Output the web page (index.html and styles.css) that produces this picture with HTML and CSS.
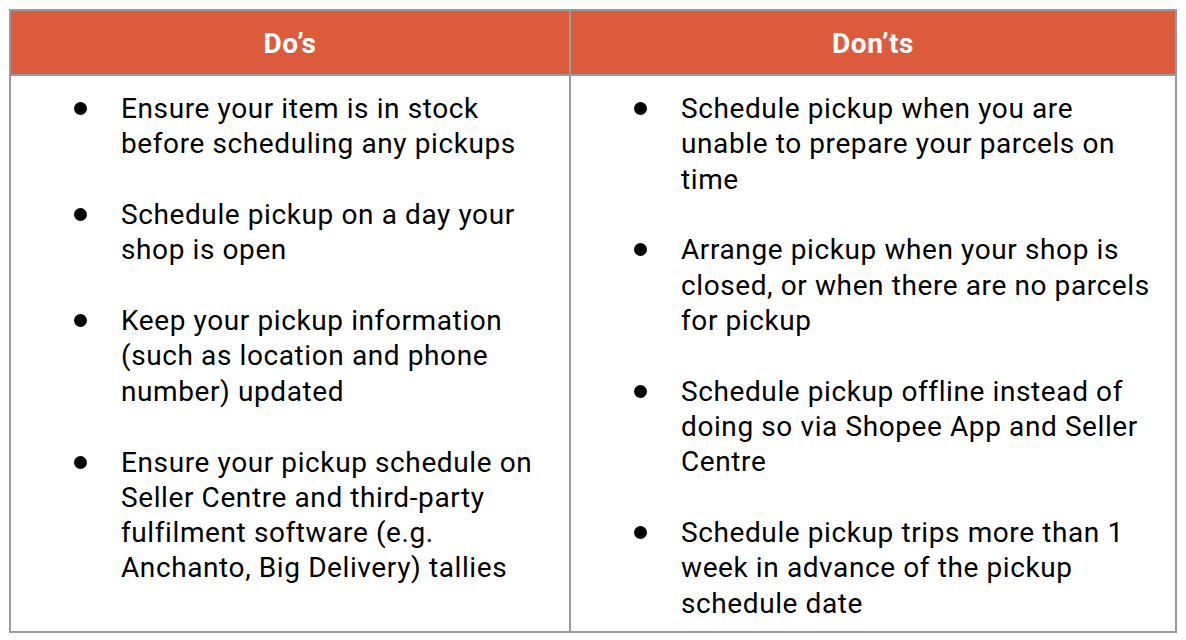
FILE: index.html
```html
<!DOCTYPE html>
<html lang="en">
<head>
<meta charset="utf-8">
<title>Do's and Don'ts</title>
<link rel="stylesheet" href="styles.css">
</head>
<body>
<div class="table">
  <div class="head">Do’s</div>
  <div class="head divider">Don’ts</div>
  <div class="cell">
    <ul class="list">
      <li>Ensure your item is in stock before scheduling any pickups</li>
      <li>Schedule pickup on a day your shop is open</li>
      <li>Keep your pickup information (such as location and phone number) updated</li>
      <li>Ensure your pickup schedule on Seller Centre and third-party fulfilment software (e.g. Anchanto, Big Delivery) tallies</li>
    </ul>
  </div>
  <div class="cell divider">
    <ul class="list">
      <li>Schedule pickup when you are unable to prepare your parcels on time</li>
      <li>Arrange pickup when your shop is closed, or when there are no parcels for pickup</li>
      <li>Schedule pickup offline instead of doing so via Shopee App and Seller Centre</li>
      <li>Schedule pickup trips more than 1 week in advance of the pickup schedule date</li>
    </ul>
  </div>
</div>
</body>
</html>
```
FILE: styles.css
```css
html, body {
  margin: 0;
  padding: 0;
  background: #ffffff;
}
body {
  font-family: Roboto, "Liberation Sans", sans-serif;
  color: #000000;
}
.table {
  margin: 9px 0 0 9px;
  width: 1168px;
  box-sizing: border-box;
  border: 2px solid #9a9a9a;
  display: grid;
  grid-template-columns: 558px 606px;
  grid-template-rows: 65px 555px;
}
.head {
  background: #dd5b3d;
  color: #ffffff;
  font-weight: 700;
  font-size: 28px;
  letter-spacing: 0.6px;
  display: flex;
  align-items: center;
  justify-content: center;
  border-bottom: 2px solid #9a9a9a;
  padding-top: 1px;
  box-sizing: border-box;
}
.divider {
  border-left: 2px solid #9a9a9a;
}
.cell {
  padding: 15px 14px 0 110px;
  box-sizing: border-box;
}
.list {
  list-style: none;
  margin: 0;
  padding: 0;
  font-size: 28px;
  letter-spacing: 0.6px;
  line-height: 35.3px;
}
.list li {
  position: relative;
  margin-bottom: 35.5px;
}
.list li::before {
  content: "";
  position: absolute;
  left: -47px;
  top: 11px;
  width: 13px;
  height: 13px;
  border-radius: 50%;
  background: #000000;
}
```
